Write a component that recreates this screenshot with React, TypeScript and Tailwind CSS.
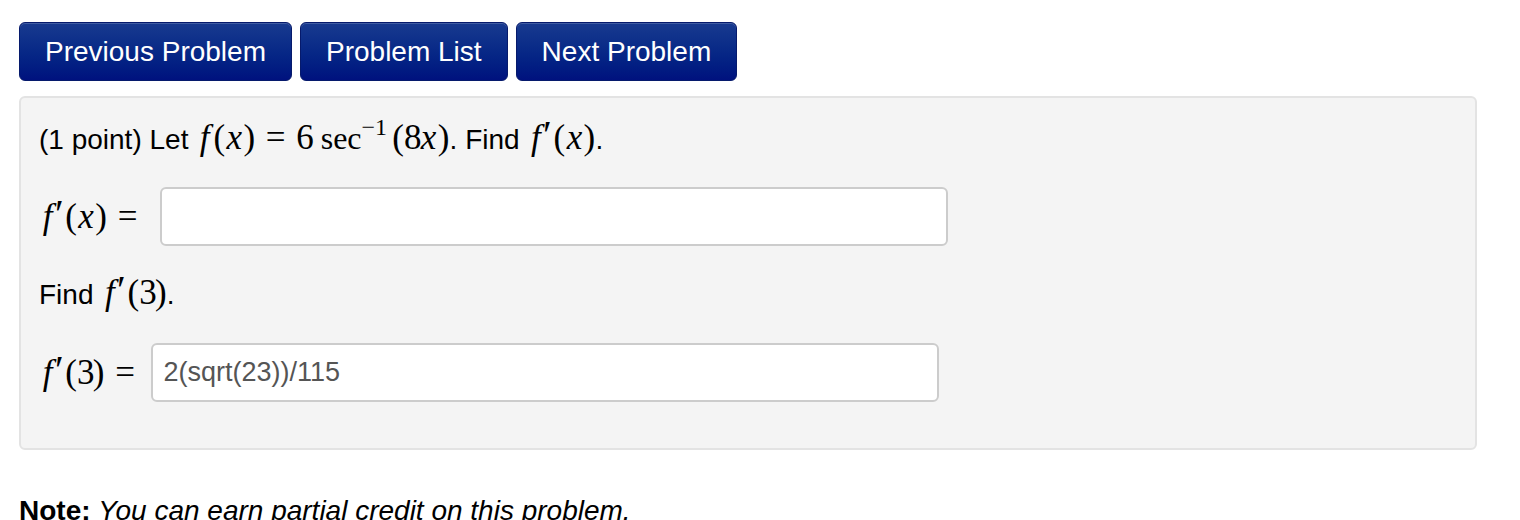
import React from "react";

const buttons = ["Previous Problem", "Problem List", "Next Problem"];

function F() {
  return <span className="inline-block w-[17px] text-center italic">f</span>;
}
function X() {
  return <span className="inline-block w-[18px] text-center italic">x</span>;
}
function L() {
  return <span className="inline-block w-[12px] text-center">(</span>;
}
function R() {
  return <span className="inline-block w-[12px] text-center">)</span>;
}
function D({ d }: { d: string }) {
  return <span className="inline-block w-[15.5px] text-center">{d}</span>;
}
function Eq() {
  return <span className="mx-[8.5px] inline-block w-[24px] text-center">=</span>;
}
function Prime() {
  return (
    <span className="inline-block w-[9px] origin-bottom-left -translate-x-[1px] scale-[1.15] text-left">′</span>
  );
}

function Math({ children }: { children: React.ReactNode }) {
  return (
    <span className="font-['Liberation_Serif','Times_New_Roman',serif] text-[35px] leading-none whitespace-nowrap">
      {children}
    </span>
  );
}

function AnswerRow({
  label,
  value,
  className,
  gap,
}: {
  label: React.ReactNode;
  value?: string;
  className?: string;
  gap: string;
}) {
  return (
    <div className={`flex items-center ${className ?? ""}`}>
      <Math>{label}</Math>
      <input
        readOnly
        value={value ?? ""}
        className={`${gap} h-[59px] w-[788px] rounded-[6px] border-2 border-[#cccccc] bg-white px-[11px] font-['Liberation_Sans',Arial,sans-serif] text-[27px] text-[#555555] outline-none`}
      />
    </div>
  );
}

export default function App() {
  return (
    <div className="min-h-[520px] bg-white pl-[19px] pt-[22px] font-['Liberation_Sans',Arial,sans-serif] text-[28px] leading-[40px] text-black">
      {/* Navigation */}
      <div className="flex gap-2">
        {buttons.map((b) => (
          <button
            key={b}
            className="h-[59px] rounded-[6px] border border-[#061a6c] bg-linear-to-b from-[#183a8f] to-[#00117e] px-[25px] text-[28px] text-white shadow-[inset_0_1px_0_rgba(255,255,255,0.18)]"
          >
            {b}
          </button>
        ))}
      </div>

      {/* Problem body */}
      <div className="mt-[15px] w-[1458px] rounded-[6px] border-2 border-[#e3e3e3] bg-[#f4f4f4] px-[18px] pt-[22px] pb-[46px]">
        <p>
          (1 point) Let{" "}
          <Math>
            <F />
            <L />
            <X />
            <R />
            <Eq />
            <D d="6" />
            <span className="ml-[9px] text-[32px]">sec</span>
            <span className="relative -top-[14px] text-[24px]">−1</span>
            <span className="ml-[5px]" />
            <L />
            <D d="8" />
            <X />
            <R />
          </Math>
          . Find{" "}
          <Math>
            <F />
            <Prime />
            <L />
            <X />
            <R />
          </Math>
          .
        </p>

        <AnswerRow
          className="mt-[27px]"
          gap="ml-[12px]"
          label={
            <>
              <F />
              <Prime />
              <L />
              <X />
              <R />
              <Eq />
            </>
          }
        />

        <p className="mt-[29px]">
          Find{" "}
          <Math>
            <F />
            <Prime />
            <L />
            <D d="3" />
            <R />
          </Math>
          .
        </p>

        <AnswerRow
          className="mt-[28px]"
          gap="ml-[5px]"
          value="2(sqrt(23))/115"
          label={
            <>
              <F />
              <Prime />
              <L />
              <D d="3" />
              <R />
              <Eq />
            </>
          }
        />
      </div>

      <p className="mt-[41px]">
        <span className="font-bold">Note:</span> <span className="italic">You can earn partial credit on this problem.</span>
      </p>
    </div>
  );
}
